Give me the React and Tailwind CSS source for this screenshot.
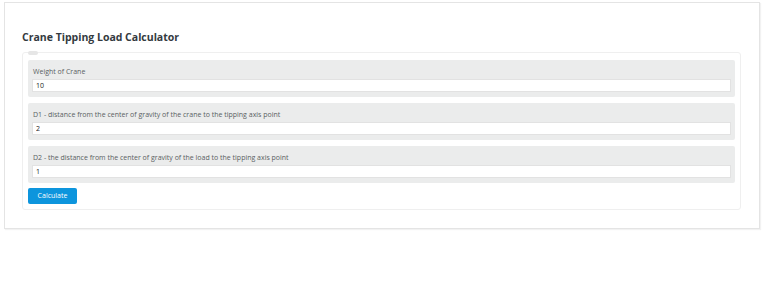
export default function App() {
  const fields = [
    { label: "Weight of Crane", value: "10" },
    { label: "D1 - distance from the center of gravity of the crane to the tipping axis point", value: "2" },
    { label: "D2 - the distance from the center of gravity of the load to the tipping axis point", value: "1" },
  ];

  return (
    <div className="w-[768px] h-[295px] bg-white pt-[2px] pl-[4px]" style={{ fontFamily: '"Open Sans", "Liberation Sans", sans-serif' }}>
      {/* Kotak luar */}
      <div className="w-[756px] h-[227px] border border-[#e4e4e4] shadow-[1px_1px_1px_rgba(0,0,0,0.05)] px-[17px] pt-[26px]">
        <h1 className="text-[10.5px] leading-[16px] font-bold text-[#333a40] mb-[7px]">
          Crane Tipping Load Calculator
        </h1>

        <div className="relative w-[719px] border border-[#efefef] rounded-[3px] px-[5px] pt-[7px] pb-[5px]">
          {/* legend kosong */}
          <div className="absolute left-[5px] top-[-2px] w-[10px] h-[4px] rounded-full bg-[#e6e6e6]" />

          <div className="flex flex-col gap-[6px]">
            {fields.map((f) => (
              <div key={f.label} className="h-[37px] bg-[#ebecec] rounded-[2px] px-[4px] pt-[6px]">
                <div className="text-[7px] leading-[12px] text-[#5a5f63] pl-[1px]">{f.label}</div>
                <input
                  type="text"
                  defaultValue={f.value}
                  className="block mt-[1px] w-full h-[13px] bg-white border border-[#e2e2e2] px-[3px] text-[7px] text-[#222] outline-none"
                />
              </div>
            ))}
          </div>

          <button className="block mt-[5px] w-[49px] h-[16px] rounded-[2px] bg-[#0d95dd] text-white text-[7px] leading-[16px]">
            Calculate
          </button>
        </div>
      </div>
    </div>
  );
}
